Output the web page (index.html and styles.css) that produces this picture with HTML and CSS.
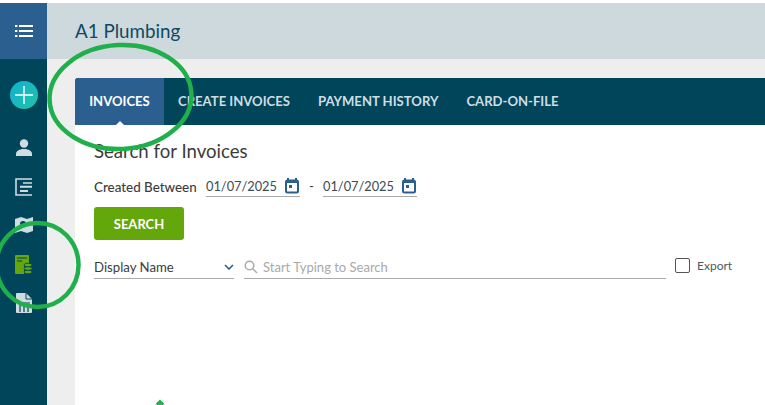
FILE: index.html
```html
<!DOCTYPE html>
<html lang="en">
<head>
<meta charset="utf-8">
<title>A1 Plumbing</title>
<link rel="stylesheet" href="styles.css">
</head>
<body>
<div class="app">
  <aside class="sidebar">
    <button class="menu-btn" aria-label="Menu">
      <svg width="18" height="14" viewBox="0 0 18 14" fill="#fff"><rect x="0" y="1" width="2.4" height="2"/><rect x="4" y="1" width="14" height="2"/><rect x="0" y="6" width="2.4" height="2"/><rect x="4" y="6" width="14" height="2"/><rect x="0" y="11" width="2.4" height="2"/><rect x="4" y="11" width="14" height="2"/></svg>
    </button>
    <div class="add-btn">
      <svg width="18" height="18" viewBox="0 0 18 18" stroke="#fff" stroke-width="1.4"><path d="M9 0v18M0 9h18"/></svg>
    </div>
    <nav class="side-nav">
      <svg width="18" height="18" viewBox="0 0 18 18" fill="#cfdde2"><circle cx="9" cy="4.500" r="4.200"/><path d="M1 17v-2c0-3.500 4-5 8-5s8 1.500 8 5v2z"/></svg>
      <svg width="18" height="18" viewBox="0 0 18 18" fill="none" stroke="#cfdde2" stroke-width="1.600"><path d="M17 1H1v16h16M8 5h9"/><path d="M5 8.800h12M5 13h8" stroke-width="2"/></svg>
      <svg width="18" height="18" viewBox="0 0 18 18" fill="#cfdde2"><path d="M0 3l6-2 6 2 6-2v14l-6 2-6-2-6 2z"/><circle cx="8" cy="8" r="3" fill="#00455a"/></svg>
      <svg width="17" height="19" viewBox="0 0 17 19"><path d="M1 0h12a1 1 0 0 1 1 1v7.500a4 4 0 0 0-5 2V19H1a1 1 0 0 1-1-1V1a1 1 0 0 1 1-1z" fill="#64a70b"/><path d="M2 3h10M2 6h5" stroke="#00455a" stroke-width="1.200"/><g fill="#64a70b" stroke="#00455a" stroke-width=".8"><ellipse cx="13" cy="17" rx="4" ry="1.800"/><ellipse cx="13" cy="13.500" rx="4" ry="1.800"/><ellipse cx="13" cy="10" rx="4" ry="1.800"/></g></svg>
      <svg width="16" height="20" viewBox="0 0 16 20" fill="#cfdde2"><path d="M1 0h9l6 6v13a1 1 0 0 1-1 1H1a1 1 0 0 1-1-1V1a1 1 0 0 1 1-1z"/><path d="M10 0v6h6" fill="none" stroke="#00455a"/><path d="M4 11v8M8 11v8M12 11v8M2 10h12" stroke="#00455a" stroke-width="1.200"/></svg>
    </nav>
  </aside>
  <div class="body">
    <header class="topbar"><h1>A1 Plumbing</h1></header>
    <main class="main">
      <div class="tabs">
        <a class="tab active">INVOICES</a>
        <a class="tab">CREATE INVOICES</a>
        <a class="tab">PAYMENT HISTORY</a>
        <a class="tab">CARD-ON-FILE</a>
      </div>
      <section class="panel">
        <h2>Search for Invoices</h2>
        <div class="dates">
          <span class="label">Created Between</span>
          <span class="date">01/07/2025
            <svg width="14" height="16" viewBox="0 0 14 16"><path d="M3 0v3M11 0v3" stroke="#2a5f8f" stroke-width="2"/><rect x="1" y="2.500" width="12" height="12" rx="1.500" fill="none" stroke="#2a5f8f" stroke-width="2"/><rect x="1" y="2" width="12" height="3" fill="#2a5f8f"/><rect x="4" y="7" width="3" height="3" fill="#2a5f8f"/></svg>
          </span>
          <span class="dash">-</span>
          <span class="date">01/07/2025
            <svg width="14" height="16" viewBox="0 0 14 16"><path d="M3 0v3M11 0v3" stroke="#2a5f8f" stroke-width="2"/><rect x="1" y="2.500" width="12" height="12" rx="1.500" fill="none" stroke="#2a5f8f" stroke-width="2"/><rect x="1" y="2" width="12" height="3" fill="#2a5f8f"/><rect x="4" y="7" width="3" height="3" fill="#2a5f8f"/></svg>
          </span>
        </div>
        <button class="search-btn">SEARCH</button>
        <div class="filter">
          <div class="select">Display Name
            <svg width="10" height="6" viewBox="0 0 10 6" fill="none" stroke="#2a5f8f" stroke-width="1.600"><path d="M1 1l4 4 4-4"/></svg>
          </div>
          <div class="search-field">
            <svg width="14" height="14" viewBox="0 0 14 14" fill="none" stroke="#a9a9a9" stroke-width="1.500"><circle cx="5.500" cy="5.500" r="4.300"/><path d="M8.700 8.700L13 13"/></svg>
            Start Typing to Search
          </div>
          <label class="export"><span class="box"></span>Export</label>
        </div>
      </section>
    </main>
  </div>
</div>
<svg class="marks" width="765" height="405" viewBox="0 0 765 405" fill="none" stroke="#20b04b" stroke-width="4.500">
  <ellipse cx="120.500" cy="97" rx="71" ry="52" transform="rotate(-3 120.500 97)"/>
  <ellipse cx="37.500" cy="265" rx="41" ry="42"/>
  <path d="M157 405l3-3 3 3" stroke-width="3.500"/>
</svg>
</body>
</html>
```

FILE: styles.css
```css
* { box-sizing: border-box; }
html, body { margin: 0; height: 100%; overflow: hidden; background: #fff; }
body { font-family: Lato, "Liberation Sans", sans-serif; color: #3c3c3c; padding-top: 3px; }
.app { display: flex; height: 402px; }
.sidebar { width: 47px; flex: none; background: #00455a; display: flex; flex-direction: column; align-items: center; }
.menu-btn { width: 47px; height: 56px; background: #2a5f8f; border: 0; padding: 0; display: flex; align-items: center; justify-content: center; }
.add-btn { width: 28px; height: 28px; border-radius: 50%; margin-top: 22px; background: linear-gradient(135deg, #12b0d4, #1fc4a4); display: flex; align-items: center; justify-content: center; }
.side-nav { margin-top: 30px; display: grid; grid-auto-rows: 38.5px; justify-items: center; align-items: start; }
.body { flex: 1; display: flex; flex-direction: column; min-width: 0; background: #eeeeee; }
.topbar { height: 56px; background: #cdd9dd; display: flex; align-items: center; padding: 0 0 2px 28px; }
.topbar h1 { margin: 0; font-size: 18.800px; font-weight: 400; color: #0e4a63; }
.main { flex: 1; margin: 19px 0 0 28px; background: #fff; }
.tabs { height: 47px; background: #00455a; display: flex; border-radius: 3px 0 0 0; }
.tab { position: relative; display: flex; align-items: center; padding: 0 14px 2px; font-size: 13.100px; font-weight: 700; color: #cfdde2; }
.tab.active { width: 89px; background: #2a5f8f; color: #fff; justify-content: center; padding: 0 0 2px; border-radius: 3px 0 0 0; }
.tab.active::after { content: ""; position: absolute; left: 50%; bottom: 0; margin-left: -4px; border: 4px solid transparent; border-top: 0; border-bottom-color: #fff; }
.panel { padding: 0 35px 0 19px; }
.panel h2 { margin: 15px 0 0; font-size: 18.600px; line-height: 23px; font-weight: 400; color: #3c3c3c; }
.dates { display: flex; align-items: center; margin-top: 11px; height: 23px; font-size: 13.400px; }
.label { font-weight: 500; width: 112px; flex: none; padding-top: 2px; }
.date { width: 94px; height: 23px; border-bottom: 1px solid #a9a9a9; display: flex; align-items: center; justify-content: space-between; padding: 2px 1px 0 0; font-size: 12.800px; color: #3c4a55; flex: none; white-space: nowrap; }
.dash { width: 23px; text-align: center; flex: none; }
.search-btn { display: block; width: 90px; height: 33px; margin-top: 10px; background: #64a70b; color: #fff; border: 0; border-radius: 3px; font: 700 13px Lato, "Liberation Sans", sans-serif; }
.filter { display: flex; align-items: center; margin-top: 11px; font-size: 13.200px; }
.select { width: 140px; flex: none; height: 28px; border-bottom: 1px solid #a9a9a9; display: flex; align-items: center; justify-content: space-between; padding-top: 4px; }
.search-field { width: 422px; flex: none; height: 28px; margin-left: 10px; border-bottom: 1px solid #a9a9a9; display: flex; align-items: center; gap: 5px; padding-top: 4px; font-size: 13px; color: #a9a9a9; }
.export { display: flex; flex: none; align-items: center; gap: 7px; margin-left: 9px; font-size: 12px; color: #4a5a66; }
.box { width: 15px; height: 15px; border: 1px solid #555; border-radius: 2px; }
.marks { position: absolute; left: 0; top: 0; pointer-events: none; }
```
